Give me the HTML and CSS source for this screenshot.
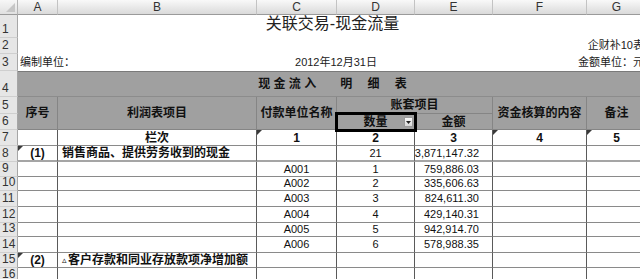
FILE: index.html
```html
<!DOCTYPE html>
<html lang="zh-CN">
<head>
  <meta charset="UTF-8">
  <meta name="viewport" content="width=device-width, initial-scale=1">
  <title>关联交易-现金流量</title>
  <link rel="stylesheet" href="styles.css">
</head>
<body>

  <div class="sheet">
    <!-- 列标 -->
    <div class="corner"></div>
    <div class="col">A</div>
    <div class="col">B</div>
    <div class="col">C</div>
    <div class="col">D</div>
    <div class="col">E</div>
    <div class="col">F</div>
    <div class="col">G</div>

    <!-- 表头 -->
    <div class="rn">1</div>
    <div class="title">关联交易-现金流量</div>

    <div class="rn">2</div>
    <div class="note">企财补10表</div>

    <div class="rn">3</div>
    <div class="info">
      <span>编制单位：</span>
      <span class="date">2012年12月31日</span>
      <span class="right">金额单位：元</span>
    </div>

    <div class="rn">4</div>
    <div class="band">现 金 流 入　　明　 细　 表</div>

    <div class="rn">5</div>
    <div class="hd tall">序号</div>
    <div class="hd tall">利润表项目</div>
    <div class="hd tall">付款单位名称</div>
    <div class="hd wide">账套项目</div>
    <div class="hd tall">资金核算的内容</div>
    <div class="hd tall">备注</div>

    <div class="rn">6</div>
    <div class="hd sel">数量
      <span class="drop">
        <svg width="5" height="3" viewBox="0 0 5 3"><path d="M0 0H5L2.5 3Z" fill="#222"/></svg>
      </span>
    </div>
    <div class="hd">金额</div>

    <!-- 栏次 -->
    <div class="rn">7</div>
    <div class="c"></div>
    <div class="c b ctr">栏次</div>
    <div class="c b ctr mark">1</div>
    <div class="c b ctr">2</div>
    <div class="c b ctr">3</div>
    <div class="c b ctr mark">4</div>
    <div class="c b ctr mark">5</div>

    <!-- 明细 -->
    <div class="rn">8</div>
    <div class="c b ctr mark thick">(1)</div>
    <div class="c b thick">销售商品、提供劳务收到的现金</div>
    <div class="c thick"></div>
    <div class="c ctr thick">21</div>
    <div class="c rt thick">3,871,147.32</div>
    <div class="c thick"></div>
    <div class="c thick"></div>

    <div class="rn">9</div>
    <div class="c"></div><div class="c"></div>
    <div class="c ctr">A001</div><div class="c ctr">1</div><div class="c rt">759,886.03</div>
    <div class="c"></div><div class="c"></div>

    <div class="rn">10</div>
    <div class="c"></div><div class="c"></div>
    <div class="c ctr">A002</div><div class="c ctr">2</div><div class="c rt">335,606.63</div>
    <div class="c"></div><div class="c"></div>

    <div class="rn">11</div>
    <div class="c"></div><div class="c"></div>
    <div class="c ctr">A003</div><div class="c ctr">3</div><div class="c rt">824,611.30</div>
    <div class="c"></div><div class="c"></div>

    <div class="rn">12</div>
    <div class="c"></div><div class="c"></div>
    <div class="c ctr">A004</div><div class="c ctr">4</div><div class="c rt">429,140.31</div>
    <div class="c"></div><div class="c"></div>

    <div class="rn">13</div>
    <div class="c"></div><div class="c"></div>
    <div class="c ctr">A005</div><div class="c ctr">5</div><div class="c rt">942,914.70</div>
    <div class="c"></div><div class="c"></div>

    <div class="rn">14</div>
    <div class="c"></div><div class="c"></div>
    <div class="c ctr">A006</div><div class="c ctr">6</div><div class="c rt">578,988.35</div>
    <div class="c"></div><div class="c"></div>

    <div class="rn">15</div>
    <div class="c b ctr mark">(2)</div>
    <div class="c b"><span class="tri">▵</span>客户存款和同业存放款项净增加额</div>
    <div class="c"></div><div class="c"></div><div class="c"></div>
    <div class="c"></div><div class="c"></div>

    <div class="rn">16</div>
    <div class="c"></div><div class="c"></div><div class="c"></div><div class="c"></div>
    <div class="c"></div><div class="c"></div><div class="c"></div>
  </div>

</body>
</html>
```

FILE: styles.css
```css
body {
  margin: 0;
  overflow: hidden;
  background: #fff;
  font-family: "Liberation Sans", "Noto Sans CJK SC", sans-serif;
  font-size: 11px;
  color: #111;
}
.sheet {
  display: grid;
  grid-template-columns: 18px 40px 199px 80px 78px 78px 94px 60px;
  grid-template-rows: 15px 23px 16px 17px 26px 17px 16px 16px 16px 15px 14px 16px 16px 14px 16px 15px 15px;
}
.sheet > div {
  box-sizing: border-box;
  min-width: 0;
  white-space: nowrap;
  line-height: 1;
}
.corner {
  position: relative;
  background: linear-gradient(#f7f7f7, #e0e0e0);
  border-right: 1px solid #b5b5b5;
  border-bottom: 1px solid #9a9a9a;
}
.corner::after {
  content: "";
  position: absolute;
  right: 2px;
  bottom: 2px;
  border-left: 9px solid transparent;
  border-bottom: 9px solid #c6c6c6;
}
.col {
  display: flex;
  align-items: center;
  justify-content: center;
  background: linear-gradient(#f9f9f9, #dadada);
  border-right: 1px solid #c3c3c3;
  border-bottom: 1px solid #9a9a9a;
  font-size: 12px;
  color: #333;
}
.rn {
  display: flex;
  align-items: flex-end;
  padding: 0 0 2px 2px;
  background: #e6e6e6;
  border-right: 1px solid #a6a6a6;
  border-bottom: 1px solid #cfcfcf;
  font-size: 12px;
  color: #333;
}
.title {
  grid-column: span 7;
  display: flex;
  justify-content: center;
  align-items: flex-start;
  font-size: 16px;
  line-height: 18px !important;
  color: #222;
}
.note {
  grid-column: span 7;
  display: flex;
  justify-content: flex-end;
  align-items: flex-end;
  padding: 0 3px 3px 0;
  color: #222;
}
.info {
  grid-column: span 7;
  display: grid;
  grid-template-columns: 1fr auto 1fr;
  align-items: end;
  padding: 0 3px 3px 2px;
  color: #222;
}
.info .date {
  padding-left: 8px;
}
.info .right {
  text-align: right;
}
.band {
  grid-column: span 7;
  display: flex;
  align-items: center;
  justify-content: center;
  background: #a0a0a0;
  border-top: 1px solid #7a7a7a;
  border-bottom: 1px solid #8c8c8c;
  font-size: 12px;
  font-weight: bold;
}
.hd {
  display: flex;
  align-items: center;
  justify-content: center;
  background: #a0a0a0;
  border-right: 1px solid #858585;
  border-bottom: 1px solid #858585;
  font-size: 12px;
  font-weight: bold;
}
.tall {
  grid-row: span 2;
}
.wide {
  grid-column: span 2;
}
.sel {
  position: relative;
  z-index: 1;
  outline: 3px solid #000;
  outline-offset: -1px;
}
.drop {
  position: absolute;
  right: 1px;
  top: 3px;
  box-sizing: border-box;
  width: 9px;
  height: 10px;
  display: flex;
  align-items: center;
  justify-content: center;
  background: linear-gradient(#fafafa, #d8d8d8);
  border: 1px solid #9a9a9a;
}
.c {
  display: flex;
  align-items: center;
  padding: 0 4px;
  border-right: 1px solid #5a5a5a;
  border-bottom: 1px solid #8a8a8a;
}
.ctr {
  justify-content: center;
}
.rt {
  justify-content: flex-end;
  padding-right: 13px;
}
.b {
  font-size: 12px;
  font-weight: bold;
}
.thick {
  border-bottom: 2px solid #a5a5a5;
}
.mark {
  position: relative;
}
.mark::before {
  content: "";
  position: absolute;
  top: 0;
  left: 0;
  border-top: 5px solid #3a3a3a;
  border-right: 5px solid transparent;
}
.tri {
  font-size: 9px;
  font-weight: normal;
  margin-right: 1px;
}
```
